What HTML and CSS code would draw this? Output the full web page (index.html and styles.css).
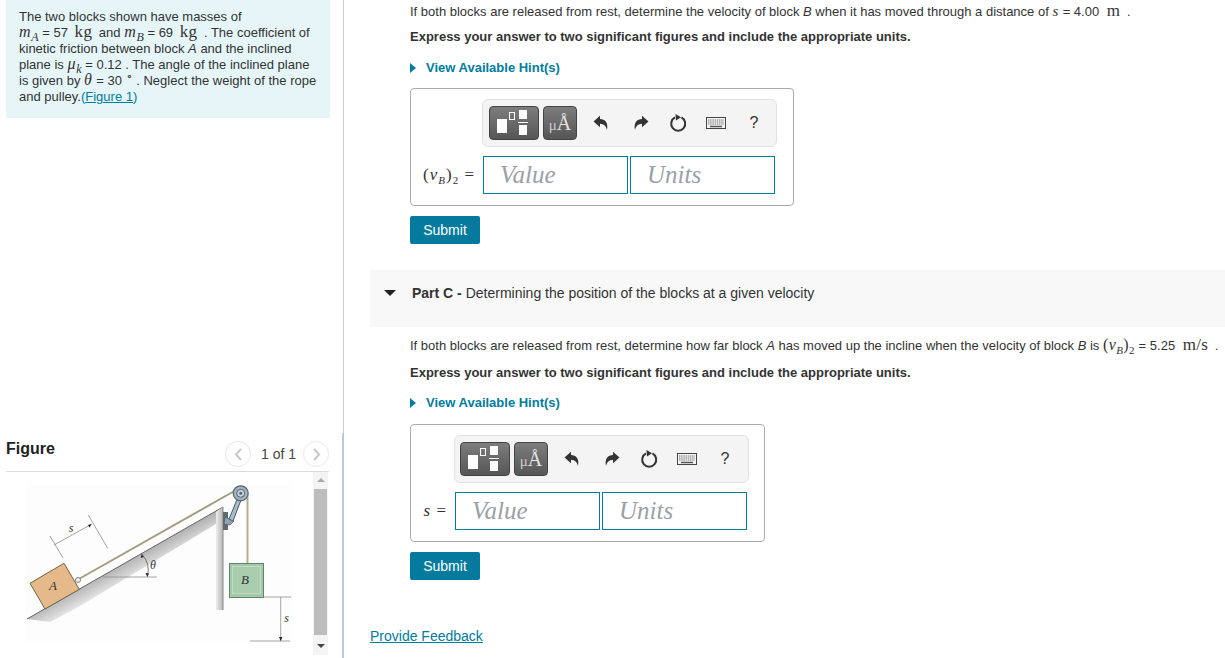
FILE: index.html
```html
<!DOCTYPE html>
<html lang="en">
<head>
<meta charset="utf-8">
<title>Blocks on an incline</title>
<link rel="stylesheet" href="styles.css">
</head>
<body>
<svg class="defs" width="0" height="0" aria-hidden="true">
  <defs>
    <symbol id="i-template" viewBox="0 0 50 34">
      <rect x="8" y="13" width="10" height="14" fill="#fff"/>
      <rect x="20.500" y="6.500" width="5" height="7" fill="none" stroke="#fff"/>
      <rect x="30" y="4" width="8" height="9" fill="#fff"/>
      <rect x="29" y="16" width="10" height="1" fill="#fff"/>
      <rect x="30" y="19" width="8" height="10" fill="#fff"/>
    </symbol>
    <symbol id="i-undo" viewBox="0 0 16 16">
      <path d="M0.500 6.500 7 0.800V4C12 4.200 15.500 7.500 14 15 13 11.200 11 9 7 8.800V12.200Z" fill="#333"/>
    </symbol>
    <symbol id="i-redo" viewBox="0 0 16 16">
      <path d="M15.500 6.500 9 0.800V4C4 4.200 0.500 7.500 2 15 3 11.200 5 9 9 8.800V12.200Z" fill="#333"/>
    </symbol>
    <symbol id="i-reset" viewBox="0 0 18 18">
      <path d="M6 3.400A7 7 0 1 0 12.400 3.400" fill="none" stroke="#333" stroke-width="2"/>
      <path d="M6.500 0 12 3.200 7 6.500Z" fill="#333"/>
    </symbol>
    <symbol id="i-keys" viewBox="0 0 20 12">
      <rect x="0.500" y="0.500" width="19" height="11" fill="#f4f4f4" stroke="#444"/>
      <path d="M2 3h16M2 5h16M2 7h16" stroke="#777" stroke-dasharray="1.500 .7"/>
      <path d="M4 9.500h12" stroke="#555" stroke-width="1.500"/>
    </symbol>
  </defs>
</svg>
<div class="page">
  <aside class="left">
    <div class="intro">
      The two blocks shown have masses of<br>
      <i class="m">m</i><sub class="m-sub"><i>A</i></sub> = 57 <span class="unit">kg</span> and <i class="m">m</i><sub class="m-sub"><i>B</i></sub> = 69 <span class="unit">kg</span> . The coefficient of kinetic friction between block <i>A</i> and the inclined plane is <i class="m">μ</i><sub class="m-sub"><i>k</i></sub> = 0.12 . The angle of the inclined plane is given by <i class="m">θ</i> = 30 <sup class="m-sup">∘</sup> . Neglect the weight of the rope and pulley.<a class="link" href="#">(<u>Figure 1</u>)</a>
    </div>
    <div class="figure-head">
      <h2 class="figure-title">Figure</h2>
      <div class="pager">
        <span class="round"><svg width="9" height="13" viewBox="0 0 9 13"><path d="M7 1 2 6.500 7 12" fill="none" stroke="#c8c8c8" stroke-width="2"/></svg></span>
        <span class="pager-text">1 of 1</span>
        <span class="round"><svg width="9" height="13" viewBox="0 0 9 13"><path d="M2 1 7 6.500 2 12" fill="none" stroke="#c8c8c8" stroke-width="2"/></svg></span>
      </div>
    </div>
    <div class="figure-body">
      <svg class="diagram" width="267" height="157" viewBox="26 485 267 157">
        <defs>
          <linearGradient id="slope" gradientUnits="userSpaceOnUse" x1="125" y1="563" x2="137" y2="585">
            <stop offset="0" stop-color="#b5b5b5"/>
            <stop offset="1" stop-color="#fdfdfd"/>
          </linearGradient>
          <linearGradient id="wall" x1="0" y1="0" x2="1" y2="0">
            <stop offset="0" stop-color="#eeeeee"/>
            <stop offset="1" stop-color="#b5b5b5"/>
          </linearGradient>
        </defs>
        <rect x="26" y="485" width="267" height="157" fill="#fdfdfd"/>
        <path d="M27 619 223 507 216 524 80 606 50 622Z" fill="url(#slope)"/>
        <path d="M27 619 223 507" fill="none" stroke="#666"/>
        <path d="M216 512 223 507V610H216Z" fill="url(#wall)"/>
        <path d="M223 507V610" stroke="#8a8a8a"/>
        <path d="M78 579.500 237 489.500" stroke="#a39d80" stroke-width="2"/>
        <path d="M247.500 495V564" stroke="#b5ad92" stroke-width="2"/>
        <circle cx="78" cy="580" r="2.500" fill="#eee" stroke="#888"/>
        <path d="M30 583.300 64 563.300 79.300 589.300 45 609Z" fill="#e6b98a" stroke="#6f6248"/>
        <text class="fig-label" x="53" y="590" text-anchor="middle">A</text>
        <path d="M223 512 H228 V530 H223Z" fill="#5e6a72"/>
        <path d="M225 517 L234 521 L230 525 L224 524Z" fill="#8fa3b3" stroke="#4d5a64" stroke-width=".7"/>
        <path d="M238 497 L241 500 L233 521 L229 519Z" fill="#a7bdcd" stroke="#4d5a64"/>
        <circle cx="240.700" cy="493.300" r="7.500" fill="#9fb2c1" stroke="#56646f" stroke-width="1.200"/>
        <circle cx="240.700" cy="493.300" r="4" fill="#c5d3de" stroke="#56646f"/>
        <circle cx="240.700" cy="493.300" r="1.500" fill="#56646f"/>
        <rect x="229.500" y="563.500" width="34" height="34" fill="#a4c8a9" stroke="#5d8568"/>
        <rect x="232.500" y="566.500" width="28" height="27" fill="#a9cdae" stroke="#c0dcc2"/>
        <text class="fig-label" x="245" y="584" text-anchor="middle">B</text>
        <path d="M50 536 63 558M88.300 515 107.700 548.300M54 545 91.700 524M103 577H157M263.500 597H291M250 641H290M280.700 597V641" fill="none" stroke="#8d8d8d" stroke-width=".8"/>
        <path d="M141.700 554A24 24 0 0 1 147.300 576.700" fill="none" stroke="#555" stroke-width=".8"/>
        <path d="M280.700 641 279 637H282.400ZM141.700 554 140.800 558 143.500 557ZM147.300 576.700 145.500 573 149 573.500ZM91.700 524 88 525 89.500 527.500Z" fill="#222"/>
        <text class="fig-label small" x="71" y="532" text-anchor="middle">s</text>
        <text class="fig-label small" x="153" y="569" text-anchor="middle">θ</text>
        <text class="fig-label small" x="286.500" y="622" text-anchor="middle">s</text>
      </svg>
      <div class="scrollbar">
        <span class="arrow up"></span>
        <span class="thumb"></span>
        <span class="arrow down"></span>
      </div>
    </div>
  </aside>

  <main class="right">
    <div class="part-body first">
      <p class="prompt">If both blocks are released from rest, determine the velocity of block <i>B</i> when it has moved through a distance of <i class="m">s</i> = 4.00 <span class="unit gap">m</span> .</p>
      <p class="express">Express your answer to two significant figures and include the appropriate units.</p>
      <a class="hint" href="#"><span class="tri"></span>View Available Hint(s)</a>
      <div class="answer answer-b">
        <div class="toolbar">
          <span class="tool wide"><svg width="50" height="34"><use href="#i-template"/></svg></span>
          <span class="tool narrow"><span class="mu">μ</span>Å</span>
          <span class="ico undo"><svg width="16" height="16"><use href="#i-undo"/></svg></span>
          <span class="ico redo"><svg width="16" height="16"><use href="#i-redo"/></svg></span>
          <span class="ico reset"><svg width="18" height="18"><use href="#i-reset"/></svg></span>
          <span class="ico keys"><svg width="20" height="12"><use href="#i-keys"/></svg></span>
          <span class="ico help">?</span>
        </div>
        <div class="entry">
          <span class="eq">(<i>v</i><sub><i>B</i></sub>)<sub>2</sub> =</span>
          <span class="field">Value</span>
          <span class="field">Units</span>
        </div>
      </div>
      <button class="submit" type="button">Submit</button>
    </div>

    <div class="part-head">
      <span class="tri-down"></span>
      <span><b>Part C -</b> Determining the position of the blocks at a given velocity</span>
    </div>

    <div class="part-body">
      <p class="prompt second">If both blocks are released from rest, determine how far block <i>A</i> has moved up the incline when the velocity of block <i>B</i> is <span class="m-group">(<i>v</i><sub><i>B</i></sub>)<sub>2</sub></span> = 5.25 <span class="unit gap">m/s</span> .</p>
      <p class="express tight">Express your answer to two significant figures and include the appropriate units.</p>
      <a class="hint" href="#"><span class="tri"></span>View Available Hint(s)</a>
      <div class="answer answer-s">
        <div class="toolbar">
          <span class="tool wide"><svg width="50" height="34"><use href="#i-template"/></svg></span>
          <span class="tool narrow"><span class="mu">μ</span>Å</span>
          <span class="ico undo"><svg width="16" height="16"><use href="#i-undo"/></svg></span>
          <span class="ico redo"><svg width="16" height="16"><use href="#i-redo"/></svg></span>
          <span class="ico reset"><svg width="18" height="18"><use href="#i-reset"/></svg></span>
          <span class="ico keys"><svg width="20" height="12"><use href="#i-keys"/></svg></span>
          <span class="ico help">?</span>
        </div>
        <div class="entry">
          <span class="eq"><i>s</i> =</span>
          <span class="field">Value</span>
          <span class="field">Units</span>
        </div>
      </div>
      <button class="submit" type="button">Submit</button>
    </div>
    <a class="feedback" href="#">Provide Feedback</a>
  </main>
</div>
</body>
</html>
```
FILE: styles.css
```css
* { box-sizing: border-box; }
html, body { margin: 0; padding: 0; height: 658px; overflow: hidden; background: #fff; }
body { font-family: "Liberation Sans", Arial, sans-serif; font-size: 14px; line-height: 16px; color: #333; }
.defs { position: absolute; }
.page { display: flex; height: 658px; width: 1225px; }

.left { width: 344px; flex: none; padding-left: 6px; border-right: 1px solid #c6ced6; position: relative; }
.left::after { content: ""; position: absolute; right: -1px; top: 433px; bottom: 0; width: 2px; background: #b4cbe0; }
.intro { width: 324px; height: 118px; padding: 9px 13px 0; background: #e6f6f8; font-size: 13px; }
.m { font-family: "Liberation Serif", serif; font-size: 16px; line-height: 0; letter-spacing: .8px; }
.m-sub { font-family: "Liberation Serif", serif; font-size: 12px; line-height: 0; }
.m-sup { font-family: "Liberation Serif", serif; font-size: 11px; line-height: 0; }
.unit { font-family: "Liberation Serif", serif; font-size: 17px; line-height: 0; letter-spacing: .3px; margin: 0 3px; }
.unit.gap { margin-left: 4px; color: #333; }
.link { color: #007c9e; text-decoration: none; }

.figure-head { display: flex; justify-content: space-between; align-items: flex-start; width: 323px; height: 36px; margin-top: 318px; border-bottom: 1px solid #dcdcdc; }
.figure-title { margin: 3px 0 0; font-size: 16px; line-height: 20px; font-weight: bold; color: #222; }
.pager { display: flex; align-items: center; gap: 10px; margin-top: 5px; }
.pager-text { font-size: 14px; color: #444; width: 32px; text-align: center; white-space: nowrap; }
.round { width: 26px; height: 26px; border: 1px solid #e8e8e8; border-radius: 50%; display: flex; align-items: center; justify-content: center; }

.figure-body { display: flex; align-items: flex-start; width: 323px; }
.diagram { display: block; margin: 13px 0 0 20px; flex: none; }
.fig-label { font-family: "Liberation Serif", serif; font-style: italic; font-size: 13px; fill: #333; }
.fig-label.small { font-size: 12px; }
.scrollbar { width: 15px; height: 183px; margin-left: 20px; display: flex; flex-direction: column; align-items: center; background: #f4f4f4; }
.thumb { width: 13px; height: 146px; background: #bdbdbd; margin: 0; }
.arrow { width: 0; height: 0; border-left: 4px solid transparent; border-right: 4px solid transparent; }
.arrow.up { border-bottom: 4px solid #a8a8a8; margin: 6px 0 7px; }
.arrow.down { border-top: 4px solid #444; margin: 9px 0 0; }

.right { flex: 1; min-width: 0; padding-left: 26px; }
.part-body { padding-left: 40px; }
.prompt { margin: 4px 0 0; font-size: 13px; white-space: nowrap; }
.prompt.second { margin-top: 11px; }
.prompt .m { font-size: 15px; }
.m-group { font-family: "Liberation Serif", serif; font-size: 16px; line-height: 0; letter-spacing: .4px; }
.m-group sub { font-size: 11px; line-height: 0; }
.express { margin: 9px 0 0; font-size: 13px; font-weight: bold; }
.express.tight { margin-top: 11px; }
.hint { display: flex; align-items: center; margin-top: 15px; color: #007c9e; font-size: 13px; font-weight: bold; text-decoration: none; }
.tight + .hint { margin-top: 14px; }
.tri { width: 0; height: 0; margin-right: 10px; border-left: 6px solid #007c9e; border-top: 5px solid transparent; border-bottom: 5px solid transparent; }

.answer { height: 118px; margin-top: 12px; padding: 10px; border: 1px solid #aaa; border-radius: 4px; }
.answer-b { width: 384px; }
.answer-s { width: 355px; margin-top: 13px; }
.toolbar { display: flex; align-items: center; width: 295px; height: 48px; padding-left: 6px; background: #f4f4f4; border: 1px solid #e2e2e2; border-radius: 6px; }
.answer-b .toolbar { margin-left: 61px; }
.answer-s .toolbar { margin-left: 33px; padding-left: 5px; }
.tool { display: flex; align-items: center; justify-content: center; height: 34px; border: 1px solid #444; border-radius: 4px; background: linear-gradient(#7d7d7d, #565656); }
.tool.wide { width: 50px; }
.tool svg { display: block; flex: none; margin: -1px; }
.tool.narrow { width: 34px; margin-left: 4px; font-family: "Liberation Serif", serif; font-size: 20px; color: #e4e4e4; }
.mu { font-size: 15px; color: #ccc; margin-top: 3px; }
.ico { display: flex; align-items: center; justify-content: center; width: 18px; height: 20px; font-size: 16px; }
.ico svg { display: block; flex: none; }
.undo { margin-left: 15px; }
.redo { margin-left: 22px; }
.reset { margin-left: 19px; }
.keys { margin-left: 19px; width: 20px; }
.help { margin-left: 22px; width: 12px; }

.entry { display: flex; align-items: center; margin-top: 9px; gap: 2px; }
.eq { font-family: "Liberation Serif", serif; font-size: 17px; letter-spacing: 1px; white-space: nowrap; text-align: right; padding-right: 8px; margin-right: -2px; }
.eq sub { font-size: 11px; line-height: 0; }
.answer-b .eq { width: 62px; }
.answer-s .eq { width: 34px; }
.field { width: 145px; height: 38px; padding-left: 16px; border: 1px solid #007c9e; font-family: "Liberation Serif", serif; font-style: italic; font-size: 25px; line-height: 36px; color: #9aa0a8; }

.submit { display: block; width: 70px; height: 28px; margin-top: 10px; padding: 0; border: 0; border-radius: 2px; background: #047b9d; color: #fff; font: 14px/28px "Liberation Sans", Arial, sans-serif; }
.part-head { display: flex; align-items: flex-start; height: 57px; margin-top: 26px; padding: 15px 0 0 14px; background: #f8f8f8; font-size: 14px; color: #333; }
.tri-down { width: 0; height: 0; margin: 5px 16px 0 0; border-top: 6px solid #222; border-left: 6px solid transparent; border-right: 6px solid transparent; }
.part-head b { color: #333; }
.feedback { display: inline-block; margin-top: 48px; color: #007c9e; font-size: 14px; text-decoration: underline; }
```
